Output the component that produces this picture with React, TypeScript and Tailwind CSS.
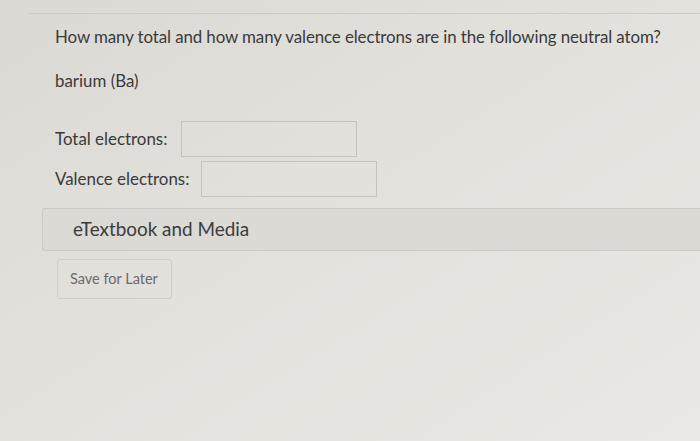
export default function App() {
  return (
    <div className="h-[441px] w-[700px] overflow-hidden bg-linear-to-br from-[#dbd9d3] via-[#e3e2dd] to-[#e9e8e4] font-['Lato','Open_Sans',sans-serif] text-[#3a3a3a]">
      <div className="ml-[28px] mt-[13px] border-t border-[#cdcbc5] pt-[12px]">
        <p className="ml-[27px] text-[16.9px] leading-[22px] tracking-[-0.1px]">
          How many total and how many valence electrons are in the following neutral atom?
        </p>
        <p className="ml-[27px] mt-[22px] text-[16.9px] leading-[22px]">barium (Ba)</p>

        <div className="ml-[27px] mt-[29px] flex items-center">
          <span className="text-[16.9px] leading-[22px]">Total electrons:</span>
          <div className="ml-[14px] h-[36px] w-[176px] border border-[#c4c3bd]" />
        </div>
        <div className="ml-[27px] mt-[4px] flex items-center">
          <span className="text-[16.9px] leading-[22px]">Valence electrons:</span>
          <div className="ml-[12px] h-[36px] w-[176px] border border-[#c4c3bd]" />
        </div>

        <div className="ml-[14px] mt-[11px] flex h-[43px] items-center rounded-l-[3px] border border-r-0 border-[#cbc9c3] bg-[#dbdad4] pl-[30px]">
          <span className="text-[18.9px] text-[#3c3c3c]">eTextbook and Media</span>
        </div>

        <div className="ml-[29px] mt-[8px] flex h-[40px] w-[115px] items-center rounded-[3px] border border-[#d0cec8] pl-[12px]">
          <span className="text-[14.5px] text-[#6b6b6b]">Save for Later</span>
        </div>
      </div>
    </div>
  );
}
